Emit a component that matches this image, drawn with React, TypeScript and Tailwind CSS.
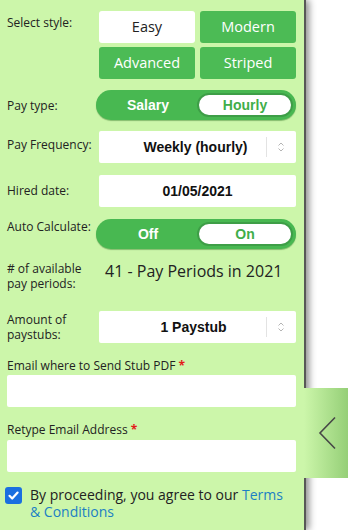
import React from "react";

const SelectArrows = () => (
  <div className="absolute right-0 top-0 h-full w-[30px] flex items-center">
    <div className="h-[20px] w-px bg-[#e3e3e3]" />
    <svg width="10" height="12" viewBox="0 0 10 12" className="ml-[9px]">
      <path d="M2.5 4.5 L5 2 L7.5 4.5" fill="none" stroke="#b5b5b5" strokeWidth="1" />
      <path d="M2.5 7.5 L5 10 L7.5 7.5" fill="none" stroke="#b5b5b5" strokeWidth="1" />
    </svg>
  </div>
);

const Toggle = ({ left, right }: { left: string; right: string }) => (
  <div className="w-[200px] h-[30px] rounded-full bg-[#48b851] flex items-center p-[3px] shadow-[0_1px_1px_rgba(0,80,0,0.35)]">
    <div className="flex-1 text-center text-white font-bold text-[14px] [font-family:'Liberation_Sans',Arial,sans-serif]">
      {left}
    </div>
    <div className="w-[96px] h-[24px] rounded-full bg-white border-2 border-[#3e9e47] flex items-center justify-center text-[#3fae4a] font-bold text-[14px] [font-family:'Liberation_Sans',Arial,sans-serif]">
      {right}
    </div>
  </div>
);

export default function App() {
  const label = "text-[12px] text-[#222] leading-[15px]";
  const bold = "font-bold text-[14px] text-[#111] [font-family:'Liberation_Sans',Arial,sans-serif]";
  return (
    <div className="relative w-[348px] h-[530px] overflow-hidden bg-white [font-family:'Open_Sans',sans-serif]">
      <div className="w-[306px] h-[530px] bg-[#ccf6aa] border-r-2 border-[#575757] shadow-[3px_0_7px_rgba(0,0,0,0.45)] pl-[7px] pr-[8px] pt-[11px]">
        {/* Select style */}
        <div className="flex">
          <div className={`w-[92px] pt-[4px] ${label}`}>Select style:</div>
          <div className="grid grid-cols-2 gap-x-[5px] gap-y-[4px] w-[197px]">
            <div className="h-[32px] bg-white rounded-[3px] flex items-center justify-center text-[14.5px] text-[#222]">Easy</div>
            <div className="h-[32px] bg-[#4cbb55] rounded-[3px] flex items-center justify-center text-[14.5px] text-white">Modern</div>
            <div className="h-[32px] bg-[#4cbb55] rounded-[3px] flex items-center justify-center text-[14.5px] text-white">Advanced</div>
            <div className="h-[32px] bg-[#4cbb55] rounded-[3px] flex items-center justify-center text-[14.5px] text-white">Striped</div>
          </div>
        </div>

        {/* Pay type */}
        <div className="flex items-center mt-[11px]">
          <div className={`w-[89px] ${label}`}>Pay type:</div>
          <Toggle left="Salary" right="Hourly" />
        </div>

        {/* Pay Frequency */}
        <div className="flex mt-[11px]">
          <div className={`w-[92px] pt-[6px] ${label}`}>Pay Frequency:</div>
          <div className={`relative w-[197px] h-[32px] bg-white rounded-[2px] flex items-center justify-center ${bold}`}>
            <span className="pr-[4px]">Weekly (hourly)</span>
            <SelectArrows />
          </div>
        </div>

        {/* Hired date */}
        <div className="flex mt-[12px]">
          <div className={`w-[92px] pt-[8px] ${label}`}>Hired date:</div>
          <div className={`w-[197px] h-[32px] bg-white rounded-[2px] flex items-center justify-center ${bold}`}>01/05/2021</div>
        </div>

        {/* Auto calculate */}
        <div className="flex mt-[12px]">
          <div className={`w-[89px] ${label}`}>Auto Calculate:</div>
          <Toggle left="Off" right="On" />
        </div>

        {/* pay periods */}
        <div className="flex mt-[12px]">
          <div className={`w-[98px] ${label}`}># of available<br />pay periods:</div>
          <div className="text-[16px] text-[#222] leading-[20px]">41 - Pay Periods in 2021</div>
        </div>

        {/* paystubs */}
        <div className="flex items-center mt-[20px]">
          <div className={`w-[92px] ${label}`}>Amount of<br />paystubs:</div>
          <div className={`relative w-[197px] h-[32px] bg-white rounded-[2px] flex items-center justify-center ${bold}`}>
            <span className="pr-[8px]">1 Paystub</span>
            <SelectArrows />
          </div>
        </div>

        {/* Email */}
        <div className={`mt-[15px] ${label}`}>
          Email where to Send Stub PDF <span className="text-[#e31b1b] font-bold">*</span>
        </div>
        <div className="mt-[2px] h-[32px] w-[289px] bg-white rounded-[2px]" />

        <div className={`mt-[15px] ${label}`}>
          Retype Email Address <span className="text-[#e31b1b] font-bold">*</span>
        </div>
        <div className="mt-[3px] h-[32px] w-[289px] bg-white rounded-[2px]" />

        {/* Checkbox */}
        <div className="flex mt-[14px] -ml-[2px]">
          <div className="w-[17px] h-[17px] shrink-0 mt-[1px] rounded-[3px] bg-[#1a6fe0] flex items-center justify-center">
            <svg width="13" height="13" viewBox="0 0 13 13">
              <path d="M2.5 6.8 L5.2 9.5 L10.6 3.6" fill="none" stroke="white" strokeWidth="2.2" strokeLinecap="round" strokeLinejoin="round" />
            </svg>
          </div>
          <div className="ml-[8px] text-[14px] leading-[17px] text-[#222]">
            By proceeding, you agree to our <span className="text-[#1b7fc4]">Terms &amp; Conditions</span>
          </div>
        </div>
      </div>

      {/* side tab */}
      <div className="absolute left-[304px] top-[388px] w-[44px] h-[90px] bg-gradient-to-r from-[#ccf6aa] to-[#95cf77] flex items-center">
        <svg width="20" height="34" viewBox="0 0 20 34" className="ml-[14px]">
          <path d="M17 1.5 L2 17 L17 32.5" fill="none" stroke="#474747" strokeWidth="1.6" />
        </svg>
      </div>
    </div>
  );
}
